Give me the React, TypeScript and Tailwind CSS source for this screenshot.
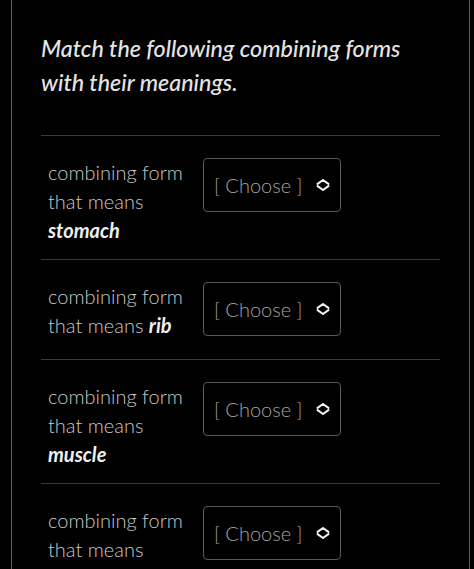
import React from "react";

const Chevrons = () => (
  <svg width="14" height="12" viewBox="0 0 14 12" fill="none" className="shrink-0">
    <path d="M1.6 4.8 L7 1 L12.4 4.8" stroke="#f4f4f4" strokeWidth="2.1" strokeLinecap="round" strokeLinejoin="round" />
    <path d="M1.6 7.2 L7 11 L12.4 7.2" stroke="#f4f4f4" strokeWidth="2.1" strokeLinecap="round" strokeLinejoin="round" />
  </svg>
);

const Select = () => (
  <div className="w-[138px] h-[54px] mb-[9px] border border-[#5a5a5a] rounded-[4px] flex items-center pl-[10px] pr-[10px]">
    <span className="text-[20px] leading-none text-[#a3a3a3] font-light whitespace-nowrap">[ Choose ]</span>
    <span className="ml-auto flex items-center">
      <Chevrons />
    </span>
  </div>
);

const rows: { word: string }[] = [
  { word: "stomach" },
  { word: "rib" },
  { word: "muscle" },
  { word: "" },
];

export default function App() {
  return (
    <div
      className="min-h-screen bg-black"
      style={{ fontFamily: "Lato, 'Open Sans', sans-serif" }}
    >
      <div className="ml-[11px] mr-[4px] min-h-screen border-l border-r border-[#5f5f5f] px-[29px]">
        <h1 className="pt-[31px] pb-[36px] pr-[20px] text-[23.3px] leading-[34px] italic font-medium text-[#e4e4e4]">
          Match the following combining forms with their meanings.
        </h1>
        {rows.map((r, i) => (
          <div
            key={i}
            className="border-t border-[#3b3b3b] pt-[22px] pb-[14px] grid grid-cols-[162px_auto] items-start"
          >
            <div className="pl-[7px] pr-[2px] text-[20px] leading-[29px] font-light text-[#c9c9c9]">
              combining form that means
              {r.word && (
                <>
                  {" "}
                  <b className="font-bold italic text-[#efefef]">{r.word}</b>
                </>
              )}
            </div>
            <Select />
          </div>
        ))}
      </div>
    </div>
  );
}
